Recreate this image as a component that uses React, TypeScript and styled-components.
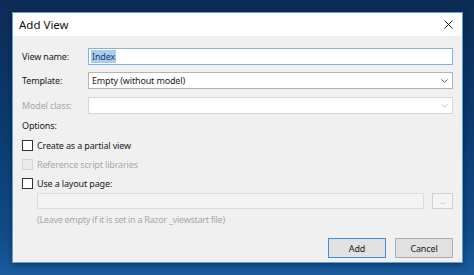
import styled, { createGlobalStyle } from "styled-components";

const GlobalStyle = createGlobalStyle`
  html, body {
    margin: 0;
    padding: 0;
  }
  body {
    width: 474px;
    height: 275px;
    overflow: hidden;
    font-family: "Noto Sans", "Open Sans", "Liberation Sans", sans-serif;
  }
`;

const Desktop = styled.div`
  width: 474px;
  height: 275px;
  box-sizing: border-box;
  padding: 12px 11px 0 12px;
  background: linear-gradient(180deg, #0c2c55 0%, #0b3a6f 45%, #114b88 85%, #1a5c9e 100%);
`;

const Dialog = styled.div`
  width: 451px;
  height: 251px;
  box-sizing: border-box;
  border: 1px solid #5f9fd8;
  display: flex;
  flex-direction: column;
  box-shadow: 0 2px 6px rgba(0, 0, 0, 0.35);
`;

const TitleBar = styled.div`
  height: 23px;
  flex-shrink: 0;
  background: #ffffff;
  display: flex;
  align-items: center;
  justify-content: space-between;
  padding: 0 8px 0 6px;
  font-size: 11.5px;
  color: #111;
`;

const CloseButton = styled.div`
  width: 12px;
  height: 12px;
  display: flex;
  align-items: center;
  justify-content: center;
`;

const Body = styled.div`
  flex: 1;
  background: #f0f0f0;
  padding: 12px 9px 0 9px;
  display: flex;
  flex-direction: column;
  font-size: 9px;
  letter-spacing: -0.15px;
  color: #1a1a1a;
`;

const FieldRow = styled.div<{ $top?: number }>`
  display: flex;
  align-items: center;
  margin-top: ${({ $top }) => $top ?? 0}px;
`;

const Label = styled.div<{ $disabled?: boolean }>`
  width: 66px;
  flex-shrink: 0;
  color: ${({ $disabled }) => ($disabled ? "#a8a8a8" : "#1a1a1a")};
`;

const TextBox = styled.div<{ $focused?: boolean; $disabled?: boolean; $height?: number }>`
  flex: 1;
  height: ${({ $height }) => $height ?? 17}px;
  box-sizing: border-box;
  border: 1px solid
    ${({ $focused, $disabled }) => ($focused ? "#7fb2e5" : $disabled ? "#dcdcdc" : "#b4b4b4")};
  background: ${({ $disabled }) => ($disabled ? "#f3f3f3" : "#ffffff")};
  display: flex;
  align-items: center;
  padding: 0 2px;
`;

const Selected = styled.span`
  background: #a9cdf0;
  color: #1b3c6a;
  padding: 0 1px;
`;

const SelectBox = styled.div<{ $disabled?: boolean }>`
  flex: 1;
  height: 17px;
  box-sizing: border-box;
  border: 1px solid ${({ $disabled }) => ($disabled ? "#d6d6d6" : "#b4b4b4")};
  background: #ffffff;
  display: flex;
  align-items: center;
  justify-content: space-between;
  padding: 0 4px 0 3px;
  color: #1a1a1a;
`;

const SectionLabel = styled.div`
  margin-top: 5px;
  height: 14px;
  line-height: 14px;
`;

const CheckRow = styled.label<{ $top: number; $disabled?: boolean }>`
  display: flex;
  align-items: center;
  gap: 4px;
  height: 14px;
  margin-top: ${({ $top }) => $top}px;
  color: ${({ $disabled }) => ($disabled ? "#a8a8a8" : "#1a1a1a")};
`;

const CheckBox = styled.span<{ $disabled?: boolean }>`
  width: 11px;
  height: 11px;
  box-sizing: border-box;
  border: 1px solid ${({ $disabled }) => ($disabled ? "#d4d4d4" : "#333333")};
  background: ${({ $disabled }) => ($disabled ? "#ebebeb" : "#ffffff")};
  flex-shrink: 0;
`;

const LayoutRow = styled.div`
  display: flex;
  align-items: center;
  gap: 8px;
  margin-top: 3px;
  padding-left: 15px;
`;

const BrowseButton = styled.div`
  width: 21px;
  height: 16px;
  box-sizing: border-box;
  border: 1px solid #cfcfcf;
  background: #f4f4f4;
  color: #b0b0b0;
  font-size: 8px;
  display: flex;
  align-items: center;
  justify-content: center;
  line-height: 1;
`;

const Hint = styled.div`
  margin-top: 4px;
  padding-left: 15px;
  height: 14px;
  line-height: 14px;
  letter-spacing: -0.28px;
  color: #a8a8a8;
`;

const Footer = styled.div`
  margin-top: auto;
  margin-bottom: 4px;
  display: flex;
  justify-content: flex-end;
  gap: 9px;
`;

const DialogButton = styled.div<{ $default?: boolean }>`
  width: 58px;
  height: 20px;
  box-sizing: border-box;
  border: 1px solid ${({ $default }) => ($default ? "#3e8ed8" : "#adadad")};
  background: #e1e1e1;
  display: flex;
  align-items: center;
  justify-content: center;
  color: #1a1a1a;
`;

const Chevron = ({ color }: { color: string }) => (
  <svg width="7" height="4" viewBox="0 0 7 4">
    <path d="M0.5 0.5 L3.5 3.2 L6.5 0.5" fill="none" stroke={color} strokeWidth="1" />
  </svg>
);

export default function App() {
  return (
    <>
      <GlobalStyle />
      <Desktop>
        <Dialog>
          <TitleBar>
            <span>Add View</span>
            <CloseButton>
              <svg width="9" height="9" viewBox="0 0 9 9">
                <path d="M0.5 0.5 L8.5 8.5 M8.5 0.5 L0.5 8.5" stroke="#222" strokeWidth="1" />
              </svg>
            </CloseButton>
          </TitleBar>
          <Body>
            <FieldRow>
              <Label>View name:</Label>
              <TextBox $focused>
                <Selected>Index</Selected>
              </TextBox>
            </FieldRow>
            <FieldRow $top={7}>
              <Label>Template:</Label>
              <SelectBox>
                <span>Empty (without model)</span>
                <Chevron color="#555" />
              </SelectBox>
            </FieldRow>
            <FieldRow $top={8}>
              <Label $disabled>Model class:</Label>
              <SelectBox $disabled>
                <span />
                <Chevron color="#c4c4c4" />
              </SelectBox>
            </FieldRow>
            <SectionLabel>Options:</SectionLabel>
            <CheckRow $top={5}>
              <CheckBox />
              Create as a partial view
            </CheckRow>
            <CheckRow $top={5} $disabled>
              <CheckBox $disabled />
              Reference script libraries
            </CheckRow>
            <CheckRow $top={5}>
              <CheckBox />
              Use a layout page:
            </CheckRow>
            <LayoutRow>
              <TextBox $disabled $height={16} />
              <BrowseButton>...</BrowseButton>
            </LayoutRow>
            <Hint>(Leave empty if it is set in a Razor _viewstart file)</Hint>
            <Footer>
              <DialogButton $default>Add</DialogButton>
              <DialogButton>Cancel</DialogButton>
            </Footer>
          </Body>
        </Dialog>
      </Desktop>
    </>
  );
}
